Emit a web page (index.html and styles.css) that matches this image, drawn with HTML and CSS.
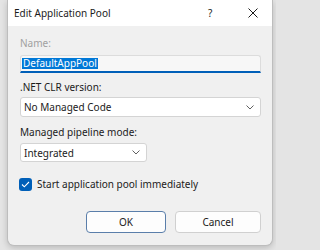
FILE: index.html
```html
<!DOCTYPE html>
<html>
<head>
<meta charset="utf-8">
<link rel="stylesheet" href="styles.css">
</head>
<body>
<div class="window">
  <div class="titlebar">
    <span class="title">Edit Application Pool</span>
    <span class="help">?</span>
    <span class="close"><svg width="10" height="10" viewBox="0 0 10 10"><path d="M0.5 0.5L9.5 9.5M9.5 0.5L0.5 9.5" stroke="#1a1a1a" stroke-width="1" fill="none"/></svg></span>
  </div>
  <div class="content">
    <div class="label disabled">Name:</div>
    <div class="textbox"><span class="sel">DefaultAppPool</span></div>
    <div class="label gap1">.NET CLR version:</div>
    <div class="combo wide"><span>No Managed Code</span><svg class="chev" width="8" height="5" viewBox="0 0 8 5"><path d="M0.5 0.5L4 4L7.5 0.5" stroke="#606060" stroke-width="1" fill="none"/></svg></div>
    <div class="label gap2">Managed pipeline mode:</div>
    <div class="combo narrow"><span>Integrated</span><svg class="chev" width="8" height="5" viewBox="0 0 8 5"><path d="M0.5 0.5L4 4L7.5 0.5" stroke="#606060" stroke-width="1" fill="none"/></svg></div>
    <div class="check">
      <span class="box"><svg width="9" height="7" viewBox="0 0 9 7"><path d="M1 3.5L3.3 5.8L8 1" stroke="#fff" stroke-width="1.1" fill="none"/></svg></span>
      <span>Start application pool immediately</span>
    </div>
    <div class="buttons">
      <div class="btn default">OK</div>
      <div class="btn">Cancel</div>
    </div>
  </div>
</div>
</body>
</html>
```
FILE: styles.css
```css
html, body { margin: 0; padding: 0; background: #e4e4e4; }
body {
  width: 276px;
  height: 250px;
  font-family: "Noto Sans", "Open Sans", sans-serif;
  font-size: 10px;
  color: #1b1b1b;
  overflow: hidden;
}
.window {
  margin-left: 7px;
  width: 264px;
  height: 245px;
  background: #f0f0f0;
  border: 1px solid #bdbdbd;
  border-top: none;
  border-radius: 0 0 7px 7px;
  box-shadow: 0 2px 6px rgba(0,0,0,0.18);
  overflow: hidden;
}
.titlebar {
  height: 26px;
  background: #ffffff;
  display: flex;
  align-items: center;
  padding-left: 6px;
}
.title { flex: 1; font-size: 10px; }
.help { width: 8px; margin-right: 32px; font-size: 10px; }
.close { width: 10px; margin-right: 14px; display: flex; }
.content { padding: 10px 12px 0 12px; }
.label { line-height: 14px; height: 14px; }
.label.disabled { color: #a0a0a0; }
.label.gap1 { margin-top: 7px; }
.label.gap2 { margin-top: 8px; }
.textbox {
  margin-top: 5px;
  width: 241px;
  height: 18px;
  box-sizing: border-box;
  background: #f7f7f7;
  border: 1px solid #dcdcdc;
  border-bottom: 2px solid #005fb8;
  border-radius: 3px 3px 0 0;
  padding: 2px 0 0 1px;
  display: flex;
  align-items: flex-start;
}
.sel {
  background: #0078d7;
  color: #fff;
  line-height: 11px;
  height: 11px;
  padding: 0 1px;
}
.combo {
  margin-top: 3px;
  height: 20px;
  box-sizing: border-box;
  background: #fff;
  border: 1px solid #d4d4d4;
  border-radius: 3px;
  display: flex;
  align-items: center;
  justify-content: space-between;
  padding: 0 6px 0 3px;
}
.combo.wide { width: 241px; }
.combo.narrow { width: 127px; margin-top: 4px; height: 19px; }
.chev { display: block; }
.check {
  margin-top: 14px;
  display: flex;
  align-items: center;
  height: 16px;
}
.box {
  width: 13px;
  height: 13px;
  box-sizing: border-box;
  background: #005fb8;
  border-radius: 3px;
  display: flex;
  align-items: center;
  justify-content: center;
  margin-left: -1px;
  margin-right: 5px;
}
.buttons {
  margin-top: 19px;
  display: flex;
  justify-content: flex-end;
  gap: 9px;
  width: 241px;
}
.btn {
  height: 22px;
  box-sizing: border-box;
  background: #fdfdfd;
  border: 1px solid #d0d0d0;
  border-radius: 4px;
  display: flex;
  align-items: center;
  justify-content: center;
  width: 86px;
}
.btn.default {
  width: 80px;
  border-color: #5a7eaa;
}
```
